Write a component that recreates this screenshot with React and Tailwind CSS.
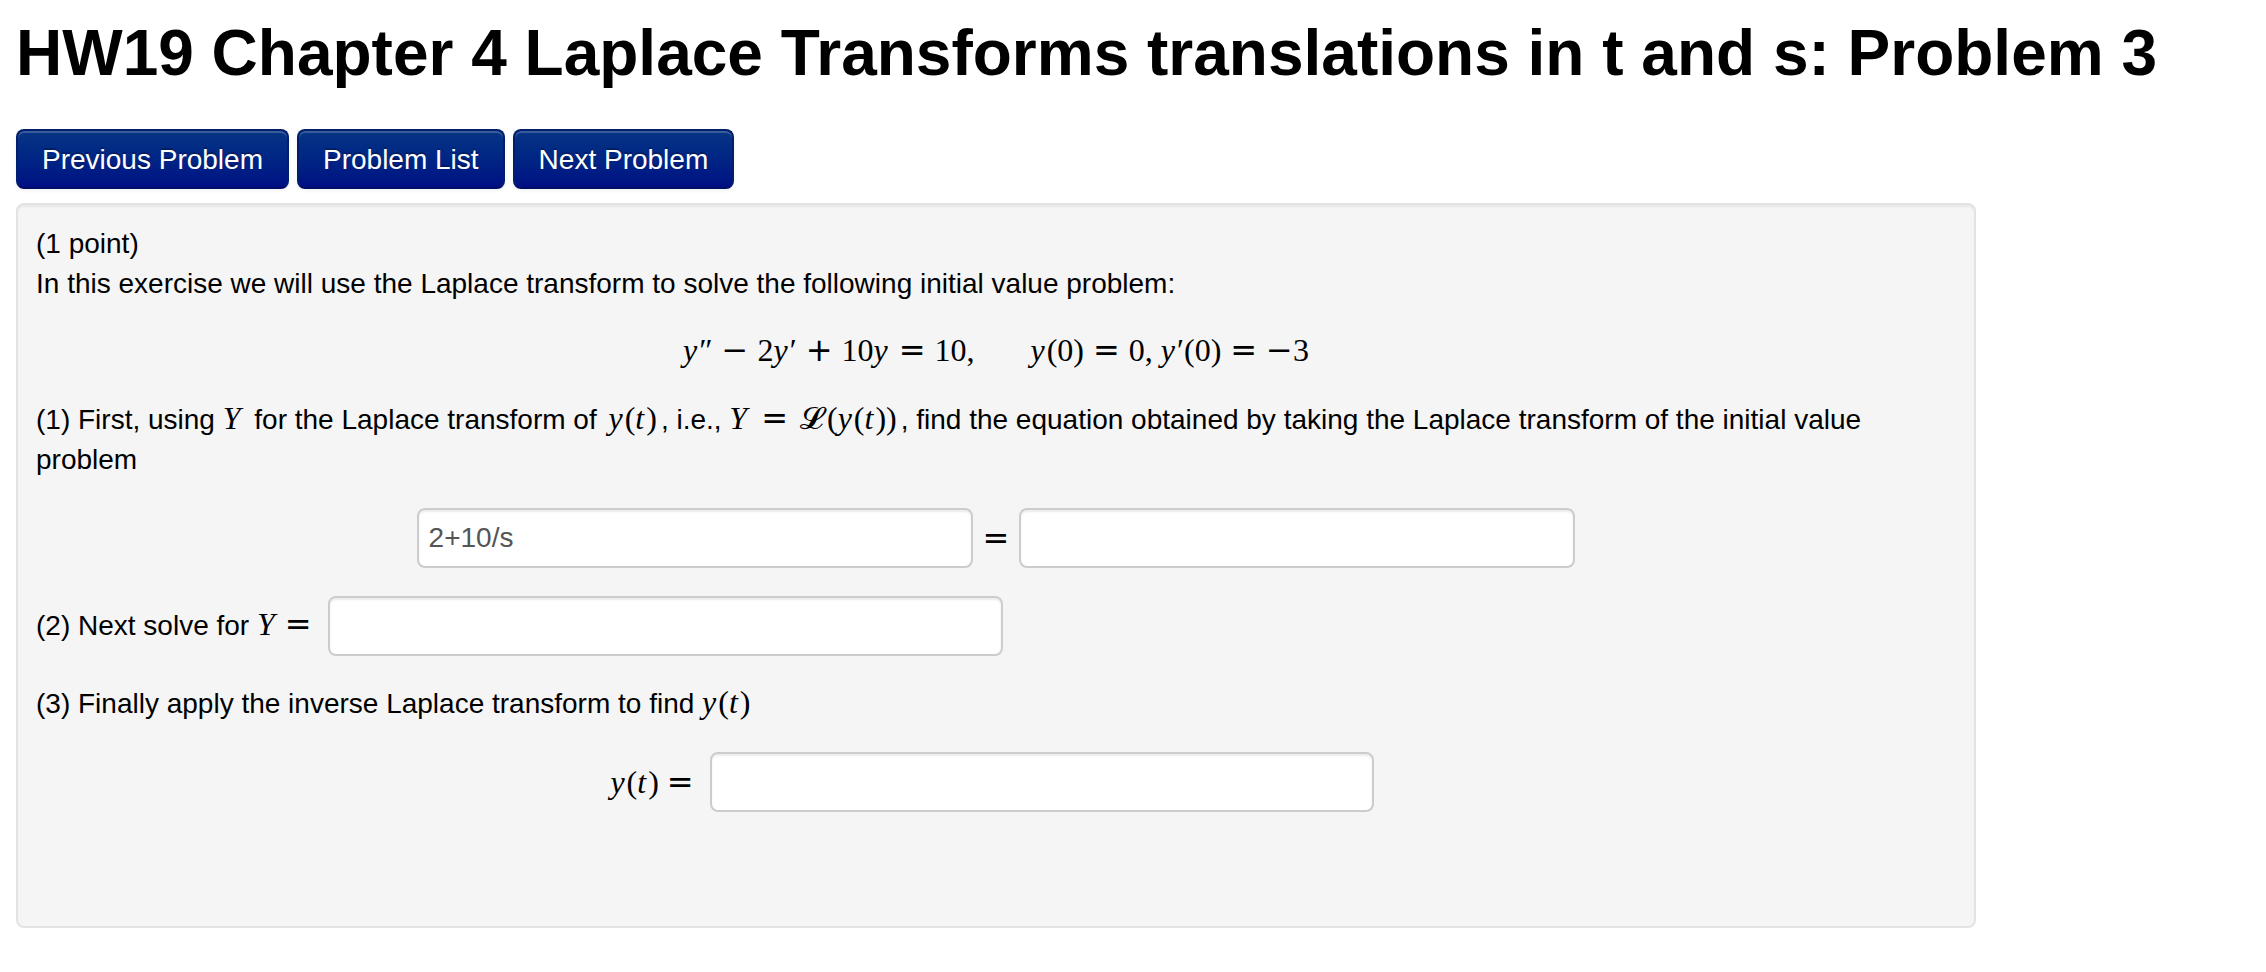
import { useState } from 'react'

const NAV_LINKS = ['Previous Problem', 'Problem List', 'Next Problem']

// Inline math run, variables inside are marked up with <V>
function Tex({ children, className = '' }) {
  return (
    <span className={`font-['Liberation_Serif','DejaVu_Serif',serif] text-[32px] leading-[32px] whitespace-nowrap ${className}`}>
      {children}
    </span>
  )
}

function V({ children }) {
  return <i className="mr-[2px]">{children}</i>
}

// relation (=) and binary (+, −) operators carry their own spacing
function Op({ children, className = 'mx-[9px]' }) {
  return <span className={`font-['DejaVu_Sans',sans-serif] text-[32px] leading-[32px] ${className}`}>{children}</span>
}

function Yt() {
  return <><V>y</V>(<V>t</V>)</>
}

function Answer({ label, value, onChange, className }) {
  return (
    <input
      type="text"
      aria-label={label}
      value={value}
      onChange={e => onChange(e.target.value)}
      className={`h-[60px] min-w-0 rounded-lg border-2 border-[#cccccc] bg-white px-[10px] text-[28px] text-[#555555] shadow-[inset_0_2px_2px_rgba(0,0,0,0.075)] outline-none ${className}`}
    />
  )
}

export default function App() {
  const [answers, setAnswers] = useState({ left: '2+10/s', right: '', solved: '', inverse: '' })
  const set = key => value => setAnswers(prev => ({ ...prev, [key]: value }))

  return (
    <main className="px-4 pt-[13px] font-['Liberation_Sans',Arial,sans-serif] text-[28px] leading-10 text-black">
      <h1 className="text-[64px] leading-[80px] font-bold">
        HW19 Chapter 4 Laplace Transforms translations in t and s: Problem 3
      </h1>

      <nav className="mt-9 flex flex-wrap gap-2">
        {NAV_LINKS.map(name => (
          <a
            key={name}
            href="#"
            className="rounded-lg border-2 border-[#00206b] border-b-[#000e66] bg-linear-to-b from-[#083484] to-[#000e84] px-6 pt-[9px] pb-[7px] text-white shadow-[inset_0_2px_0_rgba(255,255,255,0.2),0_2px_4px_rgba(0,0,0,0.05)] text-shadow-[0_-2px_0_rgba(0,0,0,0.25)]"
          >
            {name}
          </a>
        ))}
      </nav>

      <section className="mt-[14px] flex w-full max-w-[1960px] flex-col gap-7 rounded-lg border-2 border-[#e3e3e3] bg-[#f5f5f5] px-[18px] pt-[19px] pb-[114px] shadow-[inset_0_2px_2px_rgba(0,0,0,0.05)]">
        <div>
          <p>(1 point)</p>
          <p>In this exercise we will use the Laplace transform to solve the following initial value problem:</p>
        </div>

        <p className="text-center">
          <Tex>
            <V>y″</V><Op>−</Op>2<V>y′</V><Op>+</Op>10<V>y</V><Op>=</Op>10,
          </Tex>
          <Tex className="ml-14">
            <V>y</V>(0)<Op>=</Op>0, <V>y′</V>(0)<Op>=</Op><Op className="mx-0">−</Op>3
          </Tex>
        </p>

        <p>
          (1) First, using <Tex className="mr-1"><V>Y</V></Tex> for the Laplace transform of{' '}
          <Tex className="mx-1"><Yt /></Tex>, i.e.,{' '}
          <Tex className="mr-1"><V>Y</V><Op className="mx-3">=</Op><span className="mr-1">𝓛</span>(<Yt />)</Tex>, find the equation
          obtained by taking the Laplace transform of the initial value
          <br />
          problem
        </p>

        <div className="flex items-center justify-center gap-[10px]">
          <Answer label="Left side of the equation" value={answers.left} onChange={set('left')} className="w-[556px]" />
          <Op className="mx-0">=</Op>
          <Answer label="Right side of the equation" value={answers.right} onChange={set('right')} className="w-[556px]" />
        </div>

        <div className="flex items-center gap-4">
          <span>(2) Next solve for <Tex><V>Y</V><Op className="ml-2">=</Op></Tex></span>
          <Answer label="Y" value={answers.solved} onChange={set('solved')} className="w-[675px]" />
        </div>

        <p>(3) Finally apply the inverse Laplace transform to find <Tex><Yt /></Tex></p>

        <div className="flex items-center justify-center gap-4 pr-2">
          <Tex><Yt /><Op className="ml-2">=</Op></Tex>
          <Answer label="y(t)" value={answers.inverse} onChange={set('inverse')} className="w-[664px]" />
        </div>
      </section>
    </main>
  )
}
